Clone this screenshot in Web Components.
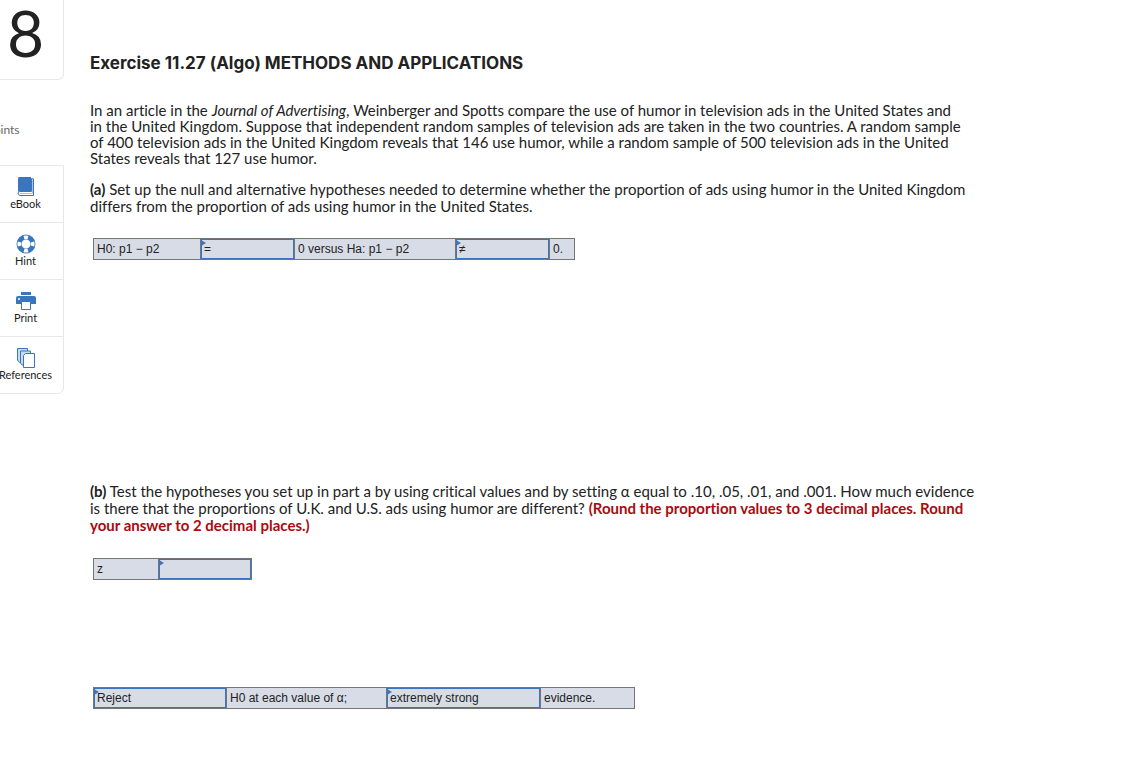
<!DOCTYPE html>
<html lang="en">
<head>
<meta charset="utf-8">
<title>Exercise 11.27</title>
<style>
html, body { margin: 0; background: #fff; }
body { font-family: Lato, "Liberation Sans", sans-serif; font-variant-ligatures: none; color: #222; min-height: 100vh; overflow-x: hidden; }
</style>
</head>
<body>
<exercise-page></exercise-page>

<template id="page-tpl">
  <style>
    :host { display: flex; align-items: flex-start; }
    main { flex: 1; min-width: 0; padding: 53px 24px 0 26px; }
    h1 { margin: 0 0 29px; font-family: Inter, Lato, sans-serif; font-size: 17px; line-height: 20px; font-weight: 700; }
    p { margin: 0; font-size: 15px; line-height: 16px; white-space: nowrap; }
    p + p { margin-top: 15px; }
    p.loose { line-height: 17px; }
    .warn { color: #aa0a0f; }
    answer-table { margin-left: 3px; }
    .first { margin-top: 23px; margin-bottom: 223px; }
    .second { margin-top: 24px; margin-bottom: 107px; }
  </style>
  <side-bar></side-bar>
  <main>
    <h1>Exercise 11.27 (Algo) METHODS AND APPLICATIONS</h1>
    <p>In an article in the <i>Journal of Advertising</i>, Weinberger and Spotts compare the use of humor in television ads in the United States and<br>in the United Kingdom. Suppose that independent random samples of television ads are taken in the two countries. A random sample<br>of 400 television ads in the United Kingdom reveals that 146 use humor, while a random sample of 500 television ads in the United<br>States reveals that 127 use humor.</p>
    <p class="loose"><b>(a)</b> Set up the null and alternative hypotheses needed to determine whether the proportion of ads using humor in the United Kingdom<br>differs from the proportion of ads using humor in the United States.</p>
    <answer-table class="first" data-cells='[["text","H0: p1 − p2",107],["select","=",94,"Relation in H0"],["text","0 versus Ha: p1 − p2",161],["select","≠",94,"Relation in Ha"],["text","0.",25]]'></answer-table>
    <p class="loose"><b>(b)</b> Test the hypotheses you set up in part a by using critical values and by setting α equal to .10, .05, .01, and .001. How much evidence<br>is there that the proportions of U.K. and U.S. ads using humor are different? <b class="warn">(Round the proportion values to 3 decimal places. Round<br>your answer to 2 decimal places.)</b></p>
    <answer-table class="second" data-cells='[["text","z",65],["input","",93,"z value"]]'></answer-table>
    <answer-table data-cells='[["select","Reject",133,"Decision"],["text","H0 at each value of α;",160],["select","extremely strong",154,"Strength of evidence"],["text","evidence.",94]]'></answer-table>
  </main>
</template>

<template id="side-tpl">
  <style>
    :host { display: block; flex: none; width: 77px; margin-left: -13px; }
    .number { box-sizing: border-box; height: 80px; border: 1px solid #e8e8e8; border-top: 0; border-radius: 0 0 6px 6px; text-align: center; font-size: 64px; line-height: 66px; }
    .points { height: 85px; box-sizing: border-box; padding-top: 42px; font-size: 12px; line-height: 16px; color: #666; }
    nav { border: 1px solid #e8e8e8; border-radius: 0 0 6px 6px; }
  </style>
  <div class="number">8</div>
  <div class="points">points</div>
  <nav aria-label="Resources">
    <tool-button label="eBook"><svg width="18" height="20" viewBox="0 0 18 20"><path d="M2 0H14V14H3Q1 14 1 15V2Q1 0 2 0Z" fill="#3a76bd"/><path d="M14.500 1.500L16.500 2V18.500H3Q1 18 1 16Q1 14.500 3 14.500H14.500Z" fill="#fff" stroke="#3a76bd"/><path d="M3 16.500H15.500V2" fill="none" stroke="#a9c3e4"/></svg></tool-button>
    <tool-button label="Hint"><svg width="20" height="20" viewBox="0 0 20 20"><circle cx="10" cy="10" r="7" fill="none" stroke="#3a76bd" stroke-width="5"/><path d="M7.500 1.800Q10 1 12.500 1.800L11.500 5.200H8.500ZM7.500 18.200Q10 19 12.500 18.200L11.500 14.800H8.500ZM1.800 7.500Q1 10 1.800 12.500L5.200 11.500V8.500ZM18.200 7.500Q19 10 18.200 12.500L14.800 11.500V8.500Z" fill="#fff"/></svg></tool-button>
    <tool-button label="Print"><svg width="20" height="18" viewBox="0 0 20 18"><path d="M5 0H15V3H5ZM2 4H18Q20 4 20 6V12H0V6Q0 4 2 4Z" fill="#3a76bd"/><path d="M5.500 9.500H14.500V17.500H5.500Z" fill="#fff" stroke="#3a76bd"/><circle cx="3" cy="7" r="1" fill="#fff"/></svg></tool-button>
    <tool-button label="References"><svg width="18" height="20" viewBox="0 0 18 20"><g fill="#fff" stroke="#3a76bd"><path d="M.500 .500H10.500V14.500H2.500L.500 12Z" fill="#c9d9ee"/><path d="M3.500 3H13.500V17H5L3.500 15Z" fill="#c9d9ee"/><path d="M8.500 5.500H17.500V19.500H6.500V7.500Z"/></g></svg></tool-button>
  </nav>
</template>

<template id="tool-tpl">
  <style>
    :host { display: block; }
    :host(:not(:first-child)) { border-top: 1px solid #e8e8e8; }
    button { box-sizing: border-box; width: 100%; height: 56px; margin: 0; padding: 11px 0 0; border: 0; background: none; font: inherit; font-size: 11px; line-height: 14px; color: #222; display: flex; flex-direction: column; align-items: center; }
    .icon { height: 20px; display: flex; align-items: center; }
  </style>
  <button type="button"><span class="icon"><slot></slot></span><span class="label"></span></button>
</template>

<template id="table-tpl">
  <style>
    :host { display: block; }
    table { box-sizing: border-box; table-layout: fixed; border-collapse: separate; border-spacing: 0; border-left: 1px solid #757575; font: 12px/20px "Liberation Sans", Arial, sans-serif; color: #222; background: #d8dce6; }
    td { box-sizing: border-box; height: 22px; padding: 0; border: 1px solid #757575; border-left: 0; vertical-align: top; white-space: nowrap; }
    td.text { padding-left: 3px; }
    td.field { position: relative; }
    select, input { display: block; box-sizing: border-box; width: 100%; height: 20px; margin: 0; padding: 0 0 0 2px; border: 1px solid #3a76bd; border-radius: 0; background: #d8dce6; font: inherit; line-height: 18px; color: inherit; appearance: none; outline: 0; }
    td.field::after { content: ""; position: absolute; left: 0; top: 1px; border-left: 5px solid #3a76bd; border-top: 3px solid transparent; border-bottom: 3px solid transparent; }
  </style>
  <table><colgroup></colgroup><tbody><tr></tr></tbody></table>
</template>

<script>
class TemplateElement extends HTMLElement {
  constructor() {
    super();
    this.attachShadow({ mode: "open" });
  }
  render(id) {
    this.shadowRoot.replaceChildren(document.getElementById(id).content.cloneNode(true));
  }
}

customElements.define("tool-button", class extends TemplateElement {
  connectedCallback() {
    this.render("tool-tpl");
    this.shadowRoot.querySelector(".label").textContent = this.getAttribute("label");
  }
});

customElements.define("answer-table", class extends TemplateElement {
  connectedCallback() {
    this.render("table-tpl");
    const cells = JSON.parse(this.dataset.cells);
    const root = this.shadowRoot;
    const row = root.querySelector("tr");
    const total = cells.reduce((sum, cell) => sum + cell[2], 1);
    root.querySelector("table").style.width = total + "px";
    for (const [kind, value, width, label] of cells) {
      const col = document.createElement("col");
      col.style.width = width + "px";
      root.querySelector("colgroup").append(col);
      const td = row.insertCell();
      if (kind === "text") {
        td.className = "text";
        td.textContent = value;
        continue;
      }
      td.className = "field";
      const field = document.createElement(kind);
      field.setAttribute("aria-label", label);
      if (kind === "select") field.add(new Option(value));
      else field.value = value;
      td.append(field);
    }
  }
});

customElements.define("side-bar", class extends TemplateElement {
  connectedCallback() { this.render("side-tpl"); }
});

customElements.define("exercise-page", class extends TemplateElement {
  connectedCallback() { this.render("page-tpl"); }
});
</script>
</body>
</html>
